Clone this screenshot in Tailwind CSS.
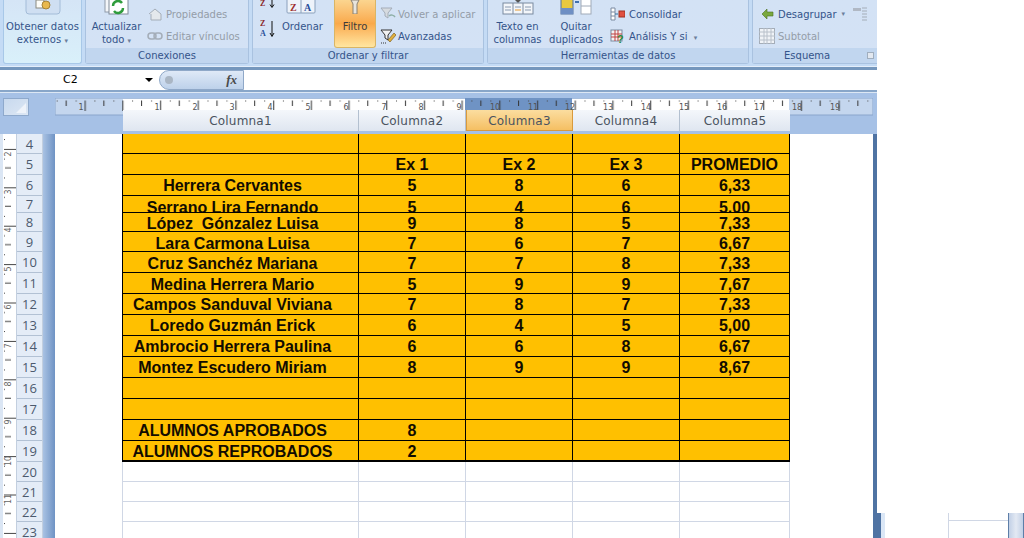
<!DOCTYPE html>
<html lang="es"><head><meta charset="utf-8"><title>Excel</title>
<script src="https://cdn.jsdelivr.net/npm/@tailwindcss/browser@4"></script></head>
<body class="bg-white">
<div class="flex w-[1024px] h-[538px] overflow-hidden bg-white font-['DejaVu_Sans',sans-serif]">
<div class="w-[877px] h-[538px] shrink-0 flex flex-col overflow-hidden">

<!-- RIBBON -->
<div class="h-[67px] shrink-0 flex bg-[#c4dbf5] text-[10px] text-[#34548a] border-b border-[#e4eefa]">
  <div class="ml-[3px] w-[79px] h-[64px] rounded-b-[3px] border border-t-0 border-[#a8c8e8] bg-gradient-to-b from-[#d5e5f6] to-[#d9f0fa] flex flex-col items-center">
    <svg class="w-[36px] h-[15px]" viewBox="0 0 36 15"><rect x="1" y="-6" width="34" height="20" rx="3" fill="#cfdff2" stroke="#a3bcd8"/><rect x="11" y="0" width="8" height="8" fill="#fdfdf8" stroke="#8a8a80"/><ellipse cx="21" cy="5" rx="4" ry="4" fill="#e8b84d" stroke="#a58338"/></svg>
    <div class="mt-[5px] text-center leading-[13px] tracking-[0.1px]">Obtener datos<br>externos <span class="text-[7px] text-[#6b7f9c]">▾</span></div>
  </div>
  <div class="ml-[3px] w-[164px] h-[64px] rounded-b-[3px] border border-t-0 border-[#a9c2e0] bg-gradient-to-b from-[#d3e2f5] to-[#d4e2f5] flex flex-col">
    <div class="h-[48px] shrink-0 flex">
      <div class="w-[61px] flex flex-col items-center">
        <svg class="w-[26px] h-[15px]" viewBox="0 0 26 15"><rect x="1" y="-6" width="19" height="18" fill="#f4f6f9" stroke="#909aa8"/><rect x="5" y="-6" width="19" height="20" fill="#fff" stroke="#7f8a98"/><path d="M9 6 A5 5 0 0 1 18 3 M19 8 A5 5 0 0 1 10 11" fill="none" stroke="#2f9c3c" stroke-width="2.4"/></svg>
        <div class="mt-[5px] text-center leading-[13px]">Actualizar<br>todo <span class="text-[7px] text-[#6b7f9c]">▾</span></div>
      </div>
      <div class="flex flex-col text-[#949da8] pt-[6px] gap-[6px]">
        <div class="flex items-center h-[16px] gap-[3px]"><svg class="w-[16px] h-[14px]" viewBox="0 0 16 14"><path d="M2 7 L8 2 L14 7 V13 H4 V7" fill="#e4e8ec" stroke="#a4adb8"/></svg><span>Propiedades</span></div>
        <div class="flex items-center h-[16px] gap-[3px]"><svg class="w-[16px] h-[10px]" viewBox="0 0 16 10"><rect x="1" y="2" width="8" height="6" rx="3" fill="none" stroke="#a4adb8" stroke-width="1.5"/><rect x="7" y="2" width="8" height="6" rx="3" fill="none" stroke="#a4adb8" stroke-width="1.5"/></svg><span>Editar vínculos</span></div>
      </div>
    </div>
    <div class="flex-1 min-h-0 bg-[#c1d6ef] text-center leading-[16px]">Conexiones</div>
  </div>
  <div class="ml-[3px] w-[232px] h-[64px] rounded-b-[3px] border border-t-0 border-[#a9c2e0] bg-gradient-to-b from-[#d3e2f5] to-[#d4e2f5] flex flex-col">
    <div class="h-[48px] shrink-0 flex">
      <div class="w-[73px] relative pl-[7px] flex flex-col">
        <svg class="w-[62px] h-[38px]" viewBox="0 0 62 38"><text x="0" y="6" font-size="8" font-weight="700" font-family="Liberation Serif" fill="#8b2a2a">Z</text><path d="M12 0V7M10 4.5L12 7.5L14 4.5" stroke="#111" fill="none"/><rect x="27" y="-4" width="28" height="17" rx="1" fill="#eef3fa" stroke="#8aa0bc"/><path d="M41 -4V13" stroke="#8aa0bc"/><text x="30" y="11" font-size="10" font-weight="700" font-family="Liberation Serif" fill="#a03030">Z</text><text x="44" y="11" font-size="10" font-weight="700" font-family="Liberation Serif" fill="#2a4f9a">A</text><text x="0" y="26" font-size="8" font-weight="700" font-family="Liberation Serif" fill="#8b2a2a">Z</text><text x="0" y="36" font-size="8" font-weight="700" font-family="Liberation Serif" fill="#2a4f9a">A</text><path d="M12 21V36M10 33L12 36.5L14 33" stroke="#111" fill="none"/></svg>
        <span class="absolute left-[29px] top-[20px] leading-[13px]">Ordenar</span>
      </div>
      <div class="ml-[8px] w-[42px] h-[48px] rounded-b-[3px] border border-t-0 border-[#d9b565] bg-gradient-to-b from-[#fbd58f] via-[#f9a94a] to-[#ffe6a0] flex flex-col items-center">
        <svg class="w-[20px] h-[14px]" viewBox="0 0 20 14"><path d="M6 0H14L12 4V14H8V4Z" fill="#e8e4dc" stroke="#8b8070"/></svg>
        <span class="mt-[6px] leading-[13px] text-[#3b3b3b]">Filtro</span>
      </div>
      <div class="ml-[4px] flex flex-col pt-[6px] gap-[6px]">
        <div class="flex items-center h-[16px] gap-[2px] text-[#949da8]"><svg class="w-[16px] h-[15px]" viewBox="0 0 16 15"><path d="M1 1H12L8 6V11L5 9V6Z" fill="#d6dbe0" stroke="#a4adb8"/><path d="M9 9A4 4 0 0 1 15 10" fill="none" stroke="#8fb0a8" stroke-width="1.5"/></svg><span>Volver a aplicar</span></div>
        <div class="flex items-center h-[16px] gap-[2px]"><svg class="w-[16px] h-[15px]" viewBox="0 0 16 15"><path d="M1 1H12L8 6V11L5 9V6Z" fill="#f2f2f2" stroke="#333"/><path d="M8 11L14 4L16 6L10 13Z" fill="#e0b040" stroke="#705010" stroke-width=".6"/><path d="M1 14H7" stroke="#333" stroke-dasharray="1 1"/></svg><span>Avanzadas</span></div>
      </div>
    </div>
    <div class="flex-1 min-h-0 bg-[#c1d6ef] text-center leading-[16px]">Ordenar y filtrar</div>
  </div>
  <div class="ml-[3px] w-[262px] h-[64px] rounded-b-[3px] border border-t-0 border-[#a9c2e0] bg-gradient-to-b from-[#d3e2f5] to-[#d4e2f5] flex flex-col">
    <div class="h-[48px] shrink-0 flex">
      <div class="w-[59px] flex flex-col items-center">
        <svg class="w-[32px] h-[15px]" viewBox="0 0 32 15"><path d="M13 0H19L16 3Z" fill="#555"/><rect x="1" y="3" width="30" height="11" fill="#f3f6fa" stroke="#7a8aa0"/><path d="M11 3V14M21 3V14" stroke="#7a8aa0"/><path d="M3 7H9M13 7H19M23 7H29" stroke="#8a9ab0"/><path d="M3 10H9M23 10H29" stroke="#8a9ab0"/><path d="M13 10H19" stroke="#e89a30"/></svg>
        <div class="mt-[5px] text-center leading-[13px]">Texto en<br>columnas</div>
      </div>
      <div class="w-[58px] flex flex-col items-center">
        <svg class="w-[32px] h-[15px]" viewBox="0 0 32 15"><rect x="1" y="-2" width="12" height="16" fill="#e8c840" stroke="#5070a0"/><rect x="1" y="8" width="12" height="6" fill="#6e8fc4"/><path d="M15 2H19" stroke="#4070b0" stroke-width="2"/><rect x="21" y="-2" width="10" height="16" fill="#fff" stroke="#a0aab8"/><path d="M21 6H31" stroke="#a0aab8"/></svg>
        <div class="mt-[5px] text-center leading-[13px] whitespace-nowrap">Quitar<br>duplicados</div>
      </div>
      <div class="ml-[5px] flex flex-col pt-[6px] gap-[6px]">
        <div class="flex items-center h-[16px] gap-[4px]"><svg class="w-[15px] h-[14px]" viewBox="0 0 15 14"><path d="M1 1H5V13H1ZM1 5H5M1 9H5" fill="#fff" stroke="#7a8aa0"/><path d="M5 7H8" stroke="#3070a0"/><rect x="9" y="4" width="6" height="6" fill="#e05040" stroke="#a03020"/></svg><span>Consolidar</span></div>
        <div class="flex items-center h-[16px] gap-[4px]"><svg class="w-[15px] h-[15px]" viewBox="0 0 15 15"><rect x="1" y="1" width="11" height="11" fill="#f4f4f4" stroke="#7a8aa0"/><path d="M1 5H12M1 8H12M5 1V12M8 1V12" stroke="#c04040"/><text x="7" y="14" font-size="11" font-weight="700" fill="#2a8a3a" font-family="Liberation Sans">?</text></svg><span>Análisis Y si <span class="ml-[3px] text-[7px] text-[#6b7f9c]">▾</span></span></div>
      </div>
    </div>
    <div class="flex-1 min-h-0 bg-[#c1d6ef] text-center leading-[16px]">Herramientas de datos</div>
  </div>
  <div class="ml-[3px] w-[125px] h-[64px] rounded-bl-[3px] border-l border-b border-[#a9c2e0] bg-gradient-to-b from-[#d3e2f5] to-[#d4e2f5] flex flex-col">
    <div class="h-[48px] shrink-0 pl-[6px] flex flex-col pt-[6px] gap-[6px]">
      <div class="flex items-center h-[16px]"><svg class="w-[12px] h-[10px] ml-[3px]" viewBox="0 0 12 10"><path d="M0 5L5 0V3H11V7H5V10Z" fill="#79a83e" stroke="#4c6e20" stroke-width=".6"/></svg><span class="ml-[4px]">Desagrupar</span><span class="ml-[5px] text-[7px] text-[#6b7f9c]">▾</span><svg class="w-[16px] h-[14px] ml-[7px]" viewBox="0 0 16 14"><rect x="1" y="1" width="8" height="3" fill="#b0b8c4"/><path d="M10 1H15M10 4H15M10 7H15M10 10H15M10 13H15" stroke="#a4adb8"/></svg></div>
      <div class="flex items-center h-[16px] text-[#949da8]"><svg class="w-[16px] h-[16px]" viewBox="0 0 16 16"><rect x=".5" y=".5" width="15" height="15" fill="#f0f3f7" stroke="#a4adb8"/><path d="M5 0V16M8 0V16M12 0V16M0 4H16M0 8H16M0 12H16" stroke="#b8c0ca"/></svg><span class="ml-[3px]">Subtotal</span></div>
    </div>
    <div class="flex-1 min-h-0 bg-[#c1d6ef] leading-[16px] flex justify-between pr-[2px]"><span class="ml-[31px]">Esquema</span><svg class="w-[7px] h-[7px] mt-[4px] mr-[1px]" viewBox="0 0 7 7"><rect x=".5" y=".5" width="6" height="6" fill="#e2e8f0" stroke="#a0aebe"/></svg></div>
  </div>
</div>

<!-- separator + formula bar -->
<div class="h-[3px] shrink-0 bg-[#7597bd]"></div>
<div class="h-[22px] shrink-0 flex bg-white border-b-[2px] border-[#88a6c9]">
  <div class="w-[159px] relative text-[11px] leading-[20px] text-black"><span class="ml-[63px]">C2</span><span class="absolute left-[145px] top-[8px] border-x-[4px] border-x-transparent border-t-[4px] border-t-black"></span></div>
  <div class="w-[85px] h-[20px] rounded-l-[10px] border border-r-[1px] border-[#8fa8c8] bg-gradient-to-b from-[#dfe9f7] to-[#bdd1ea] flex items-center justify-between pl-[5px] pr-[6px]"><span class="w-[8px] h-[8px] rounded-full bg-[#aab6c4]"></span><span class="font-['Liberation_Serif',serif] italic font-bold text-[13px] text-[#4a4a4a]">fx</span></div>
</div>

<!-- ruler + column headers -->
<div class="h-[42px] shrink-0 relative bg-[#a6c1e6] border-t border-[#dce7f4]">
  <div class="absolute left-[3px] top-[5px] w-[26px] h-[18px] border border-[#8ea9cc] bg-gradient-to-br from-[#c8d9ee] to-[#dce7f4]"><div class="absolute right-[2px] bottom-[2px] border-l-[10px] border-l-transparent border-b-[10px] border-b-[#eef3fa]"></div></div>
  <svg class="absolute left-[55px] top-[5px] w-[818px] h-[18px]" viewBox="0 0 818 18">
    <defs><pattern id="t" x="-0.3" y="0" width="37.7" height="18" patternUnits="userSpaceOnUse"><path d="M30.5 2.5V13M11.5 2.5V8" stroke="#333" stroke-width="1"/><path d="M2 3H3M21 3H22" stroke="#444"/></pattern></defs>
    <rect width="818" height="17" fill="#c4d6ee" stroke="#8aa6cc"/>
    <rect x="68" y="1" width="342" height="16" fill="#fff"/>
    <rect x="410" y="0" width="107" height="17" fill="#6f93c4"/>
    <rect x="517" y="1" width="217" height="16" fill="#fff"/>
    <rect x="0" y="0" width="818" height="18" fill="url(#t)"/>
    <g font-size="8" fill="#555" font-family="DejaVu Sans" text-anchor="middle">
      <text x="26" y="12">1</text><text x="102" y="12">1</text><text x="140" y="12">2</text><text x="177" y="12">3</text><text x="215" y="12">4</text><text x="253" y="12">5</text><text x="291" y="12">6</text><text x="329" y="12">7</text><text x="366" y="12">8</text><text x="404" y="12">9</text><text x="440" y="12">10</text><text x="478" y="12">11</text><text x="515" y="12">12</text><text x="553" y="12">13</text><text x="591" y="12">14</text><text x="629" y="12">15</text><text x="667" y="12">16</text><text x="704" y="12">17</text><text x="742" y="12">18</text><text x="780" y="12">19</text>
    </g>
  </svg>
  <div class="absolute left-[123px] top-[17px] h-[21px] flex text-[12px] tracking-[0.2px] leading-[23px] text-[#4a5360] text-center">
    <div class="w-[236px] bg-gradient-to-b from-[#f4f7fb] to-[#dfe6f0] border-r border-[#b3c0d0]">Columna1</div>
    <div class="w-[107px] bg-gradient-to-b from-[#f4f7fb] to-[#dfe6f0] border-r border-[#b3c0d0]">Columna2</div>
    <div class="w-[107px] bg-gradient-to-b from-[#fbdd9f] to-[#f5bf62] border border-t-0 border-[#d99a3c]">Columna3</div>
    <div class="w-[107px] bg-gradient-to-b from-[#f4f7fb] to-[#dfe6f0] border-r border-[#b3c0d0]">Columna4</div>
    <div class="w-[110px] bg-gradient-to-b from-[#f4f7fb] to-[#dfe6f0]">Columna5</div>
  </div>
</div>

<!-- sheet -->
<div class="flex-1 min-h-0 flex bg-white overflow-hidden">
  <svg class="w-[16px] h-[404px] shrink-0" viewBox="0 0 16 404">
    <defs><pattern id="v" x="0" y="-22.5" width="16" height="38.4" patternUnits="userSpaceOnUse"><path d="M4 38H16M5 18H11" stroke="#444"/><path d="M4 9H5M4 28H5" stroke="#444"/></pattern></defs>
    <rect width="3" height="404" fill="#dbe6f4"/>
    <rect x="3" width="13" height="404" fill="url(#v)"/>
    <g font-size="8" fill="#666" font-family="DejaVu Sans" text-anchor="middle">
      <text transform="translate(11,20) rotate(-90)">2</text><text transform="translate(11,58) rotate(-90)">3</text><text transform="translate(11,96) rotate(-90)">4</text><text transform="translate(11,135) rotate(-90)">5</text><text transform="translate(11,173) rotate(-90)">6</text><text transform="translate(11,212) rotate(-90)">7</text><text transform="translate(11,250) rotate(-90)">8</text><text transform="translate(11,288) rotate(-90)">9</text><text transform="translate(11,327) rotate(-90)">10</text><text transform="translate(11,365) rotate(-90)">11</text>
    </g>
  </svg>
  <div class="w-[27px] shrink-0 flex flex-col bg-[#e4ecf7] text-[13px] text-[#4c5a6e] text-center font-['Open_Sans',sans-serif] border-x border-[#c3cfdf] [&>div]:border-b [&>div]:border-[#b2c1d4] [&>div]:flex [&>div]:items-center [&>div]:justify-center [&>div]:shrink-0 [&>div]:pt-[2px]">
    <div class="h-[20px]">4</div><div class="h-[21px]">5</div><div class="h-[21px]">6</div><div class="h-[17px]">7</div><div class="h-[19px]">8</div><div class="h-[20px]">9</div><div class="h-[21px]">10</div><div class="h-[21px]">11</div><div class="h-[21px]">12</div><div class="h-[21px]">13</div><div class="h-[21px]">14</div><div class="h-[21px]">15</div><div class="h-[21px]">16</div><div class="h-[21px]">17</div><div class="h-[21px]">18</div><div class="h-[21px]">19</div><div class="h-[20px]">20</div><div class="h-[20px]">21</div><div class="h-[20px]">22</div><div class="h-[20px]">23</div>
  </div>
  <div class="w-[12px] shrink-0 bg-gradient-to-r from-[#a9c2e3] to-[#6f93c4]"></div>
  <div class="w-[67px] shrink-0"></div>

  <div class="w-[668px] shrink-0 flex flex-col font-['Liberation_Sans',sans-serif] font-bold text-[16px] leading-[18px] text-[#120c00] [&>div]:grid [&>div]:grid-cols-[237px_107px_107px_107px_110px] [&>div]:shrink-0 [&>div>div]:flex [&>div>div]:items-center [&>div>div]:justify-center [&>div>div]:overflow-hidden [&>div>div]:border-r [&>div>div:first-child]:border-l [&>div>div:first-child]:pr-[16px]">
    <div class="h-[20px] bg-[#ffc000] border-b border-black [&>div]:border-black"><div></div><div></div><div></div><div></div><div></div></div>
    <div class="h-[21px] bg-[#ffc000] border-b border-black [&>div]:border-black [&>div]:pt-[2px]"><div></div><div>Ex 1</div><div>Ex 2</div><div>Ex 3</div><div>PROMEDIO</div></div>
    <div class="h-[21px] bg-[#ffc000] border-b border-black [&>div]:border-black [&>div]:pt-[2px]"><div>Herrera Cervantes</div><div>5</div><div>8</div><div>6</div><div>6,33</div></div>
    <div class="h-[17px] bg-[#ffc000] border-b border-black [&>div]:border-black [&>div]:pt-[7px]"><div>Serrano Lira Fernando</div><div>5</div><div>4</div><div>6</div><div>5,00</div></div>
    <div class="h-[19px] relative z-10 bg-[#ffc000] border-b border-black [&>div]:border-black [&>div]:pt-[2px] [&>div]:overflow-visible!"><div>López&nbsp; Gónzalez Luisa</div><div>9</div><div>8</div><div>5</div><div>7,33</div></div>
    <div class="h-[20px] bg-[#ffc000] border-b border-black [&>div]:border-black [&>div]:pt-[4px]"><div>Lara Carmona Luisa</div><div>7</div><div>6</div><div>7</div><div>6,67</div></div>
    <div class="h-[21px] bg-[#ffc000] border-b border-black [&>div]:border-black [&>div]:pt-[4px]"><div>Cruz Sanchéz Mariana</div><div>7</div><div>7</div><div>8</div><div>7,33</div></div>
    <div class="h-[21px] bg-[#ffc000] border-b border-black [&>div]:border-black [&>div]:pt-[4px]"><div>Medina Herrera Mario</div><div>5</div><div>9</div><div>9</div><div>7,67</div></div>
    <div class="h-[21px] bg-[#ffc000] border-b border-black [&>div]:border-black [&>div]:pt-[2px]"><div>Campos Sanduval Viviana</div><div>7</div><div>8</div><div>7</div><div>7,33</div></div>
    <div class="h-[21px] bg-[#ffc000] border-b border-black [&>div]:border-black [&>div]:pt-[2px]"><div>Loredo Guzmán Erick</div><div>6</div><div>4</div><div>5</div><div>5,00</div></div>
    <div class="h-[21px] bg-[#ffc000] border-b border-black [&>div]:border-black [&>div]:pt-[2px]"><div>Ambrocio Herrera Paulina</div><div>6</div><div>6</div><div>8</div><div>6,67</div></div>
    <div class="h-[21px] bg-[#ffc000] border-b border-black [&>div]:border-black [&>div]:pt-[2px]"><div>Montez Escudero Miriam</div><div>8</div><div>9</div><div>9</div><div>8,67</div></div>
    <div class="h-[21px] bg-[#ffc000] border-b border-black [&>div]:border-black"><div></div><div></div><div></div><div></div><div></div></div>
    <div class="h-[21px] bg-[#ffc000] border-b border-black [&>div]:border-black"><div></div><div></div><div></div><div></div><div></div></div>
    <div class="h-[21px] bg-[#ffc000] border-b border-black [&>div]:border-black [&>div]:pt-[2px]"><div>ALUMNOS APROBADOS</div><div>8</div><div></div><div></div><div></div></div>
    <div class="h-[21px] bg-[#ffc000] border-b-2 border-black [&>div]:border-black [&>div]:pt-[2px]"><div>ALUMNOS REPROBADOS</div><div>2</div><div></div><div></div><div></div></div>
    <div class="h-[20px] border-b border-[#d0d7e5] [&>div]:border-[#d0d7e5]"><div></div><div></div><div></div><div></div><div></div></div>
    <div class="h-[20px] border-b border-[#d0d7e5] [&>div]:border-[#d0d7e5]"><div></div><div></div><div></div><div></div><div></div></div>
    <div class="h-[20px] border-b border-[#d0d7e5] [&>div]:border-[#d0d7e5]"><div></div><div></div><div></div><div></div><div></div></div>
    <div class="h-[20px] [&>div]:border-[#d0d7e5]"><div></div><div></div><div></div><div></div><div></div></div>
  </div>
  <div class="flex-1"></div>
  <div class="w-[4px] shrink-0 bg-[#4f73a3]"></div>
</div>
</div>

<!-- leftover fragment at bottom right -->
<div class="flex-1 flex flex-col">
  <div class="h-[513px] shrink-0"></div>
  <div class="flex-1 flex">
    <div class="w-[4px] bg-[#4f73a3]"></div>
    <div class="w-[4px] bg-[#dbe7f6]"></div>
    <div class="w-[63px]"></div>
    <div class="w-[60px] border-l border-[#d0d7e5]"><div class="h-[8px] border-b border-[#d0d7e5]"></div></div>
    <div class="flex-1 border-x border-[#5d7ea8] bg-gradient-to-r from-[#c2d0e6] via-[#e3e9f3] to-[#c2d0e6]"></div>
  </div>
</div>
</div>
</body></html>
